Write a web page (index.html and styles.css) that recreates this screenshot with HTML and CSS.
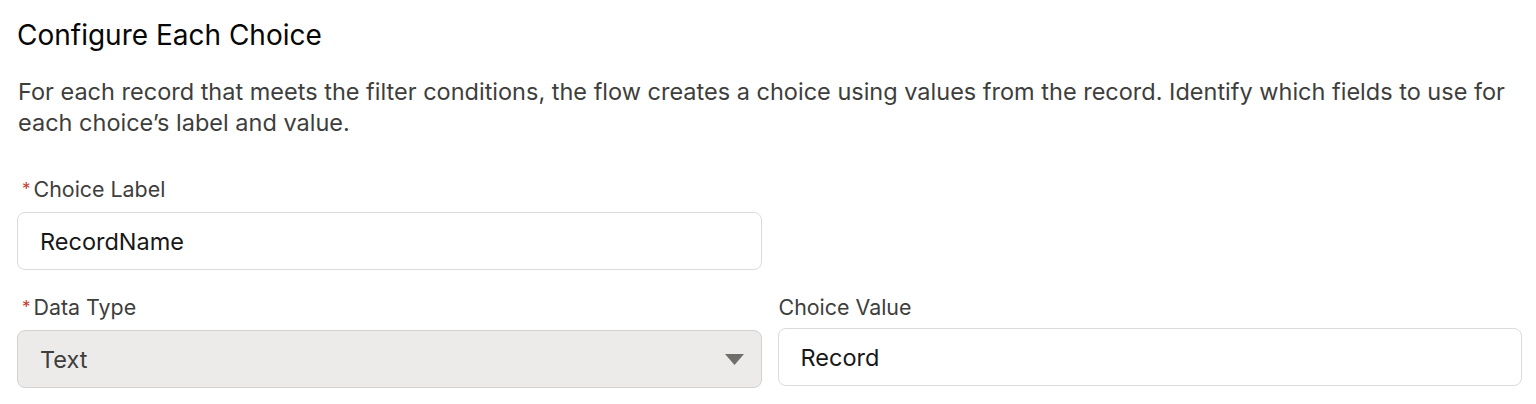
FILE: index.html
```html
<!DOCTYPE html>
<html lang="en">
<head>
<meta charset="utf-8">
<title>Configure Each Choice</title>
<link rel="stylesheet" href="styles.css">
</head>
<body>
<div class="panel">
  <h2 class="heading">Configure Each Choice</h2>
  <p class="desc">For each record that meets the filter conditions, the flow creates a choice using values from the record. Identify which fields to use for each choice’s label and value.</p>
  <div class="grid first">
    <div class="field">
      <label class="label"><abbr class="req">*</abbr>Choice Label</label>
      <div class="input">RecordName</div>
    </div>
  </div>
  <div class="grid second">
    <div class="field">
      <label class="label"><abbr class="req">*</abbr>Data Type</label>
      <div class="input select">
        <span class="sel-text">Text</span>
        <svg class="caret" width="19" height="11" viewBox="0 0 19 11"><path d="M0 0 H19 L9.5 11 Z" fill="#706e6b"/></svg>
      </div>
    </div>
    <div class="field">
      <label class="label plain">Choice Value</label>
      <div class="input">Record</div>
    </div>
  </div>
</div>
</body>
</html>
```
FILE: styles.css
```css
html, body {
  margin: 0;
  padding: 0;
  background: #ffffff;
}
body {
  font-family: Inter, "Liberation Sans", Arial, sans-serif;
  color: #3e3e3c;
}
.panel {
  display: flex;
  flex-direction: column;
  padding: 18px 14px 0 17px;
}
.heading {
  margin: 0;
  font-size: 28px;
  line-height: 35px;
  font-weight: 400;
  color: #080707;
}
.desc {
  margin: 24px 0 0 1px;
  font-size: 23.5px;
  line-height: 30.5px;
  color: #3e3e3c;
}
.grid {
  display: grid;
  grid-template-columns: 1fr 1fr;
  column-gap: 16px;
}
.first {
  margin-top: 38px;
}
.second {
  margin-top: 24px;
}
.field {
  display: flex;
  flex-direction: column;
}
.label {
  display: block;
  font-size: 21.4px;
  line-height: 27px;
  color: #3e3e3c;
  margin-bottom: 7px;
  padding-left: 5px;
}
.label.plain {
  padding-left: 1px;
}
.req {
  color: #c23934;
  text-decoration: none;
  border: none;
  font-size: 17px;
  margin-right: 3px;
  position: relative;
  top: -2px;
}
.input {
  box-sizing: border-box;
  height: 58px;
  border: 1.5px solid #dddbda;
  border-radius: 8px;
  padding: 0 22px;
  display: flex;
  align-items: center;
  font-size: 23.5px;
  color: #181818;
}
.select {
  background: #ecebea;
  border-color: #d4d2d0;
  justify-content: space-between;
  padding-right: 17px;
}
.sel-text {
  color: #3e3e3c;
}
.caret {
  display: block;
}
```
